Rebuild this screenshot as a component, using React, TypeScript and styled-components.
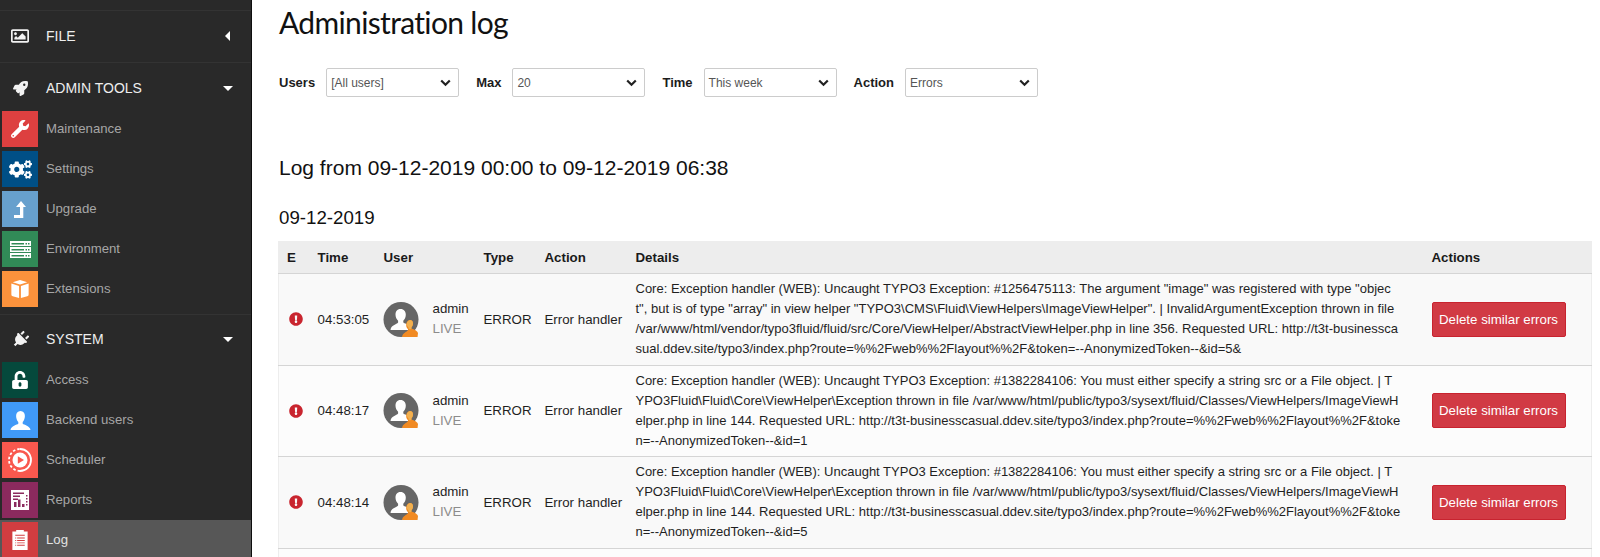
import * as React from "react";
import styled, { createGlobalStyle } from "styled-components";
import {
  FaCogs,
  FaExclamationCircle,
  FaPlug,
  FaRegImage,
  FaRocket,
  FaUnlockAlt,
  FaWrench,
} from "react-icons/fa";

const GlobalStyle = createGlobalStyle`
  html, body {
    margin: 0;
    height: 557px;
    overflow: hidden;
    background: #fff;
    font-family: "Liberation Sans", Arial, sans-serif;
    color: #1a1a1a;
  }
`;

const Page = styled.div`
  display: flex;
  width: 1600px;
  height: 557px;
  overflow: hidden;
`;

/* sidebar */
const Sidebar = styled.nav`
  width: 251px;
  height: 557px;
  flex: none;
  overflow: hidden;
  background: #292929;
  border-right: 1px solid #0e0e0e;
  padding-top: 10px;
  box-sizing: content-box;
`;

const Group = styled.div<{ $last?: boolean }>`
  border-top: 1px solid #333;
  padding-bottom: ${(p) => (p.$last ? 0 : 5)}px;
  &:first-child {
    padding-bottom: 0;
  }
`;

const GroupHead = styled.div<{ $h: number; $pad: string }>`
  display: flex;
  align-items: center;
  box-sizing: border-box;
  height: ${(p) => p.$h}px;
  padding: ${(p) => p.$pad};
  color: #eee;
  font-size: 14px;
  text-transform: uppercase;
`;

const GroupHeadIcon = styled.span<{ $size: number }>`
  display: flex;
  align-items: center;
  justify-content: center;
  width: 40px;
  color: #f2f2f2;
  font-size: ${(p) => p.$size}px;
`;

const GroupTitle = styled.span`
  flex: 1;
  margin-left: 6px;
`;

const Caret = styled.span<{ $open?: boolean }>`
  width: 0;
  height: 0;
  margin-right: 18px;
  border-style: solid;
  ${(p) =>
    p.$open
      ? "border-width: 5px 5px 0 5px; border-color: #fff transparent transparent transparent;"
      : "border-width: 5px 5px 5px 0; border-color: transparent #fff transparent transparent; margin-right: 21px;"}
`;

const ItemList = styled.div`
  display: flex;
  flex-direction: column;
`;

const Item = styled.div<{ $active?: boolean }>`
  display: flex;
  align-items: center;
  height: 40px;
  padding-left: 2px;
  color: ${(p) => (p.$active ? "#e2e2e2" : "#a6a6a6")};
  background: ${(p) => (p.$active ? "#575757" : "transparent")};
  font-size: 13.2px;
`;

const ItemIcon = styled.span<{ $bg: string; $size?: number }>`
  display: flex;
  align-items: center;
  justify-content: center;
  width: 36px;
  height: 36px;
  background: ${(p) => p.$bg};
  color: #fff;
  font-size: ${(p) => p.$size ?? 18}px;
`;

const ItemLabel = styled.span`
  margin: 0 0 2px 8px;
`;

/* main column */
const Main = styled.main`
  flex: 1;
  min-width: 0;
  padding: 0 9px 0 27px;
`;

const Title = styled.h1`
  margin: 3px 0 0;
  font-family: Lato, "Open Sans", sans-serif;
  font-size: 30px;
  font-weight: 400;
  letter-spacing: -0.65px;
  line-height: 38px;
  color: #111;
`;

const Filters = styled.form`
  display: flex;
  align-items: center;
  margin-top: 27px;
  height: 29px;
`;

const FilterLabel = styled.label`
  font-size: 13px;
  font-weight: 700;
  color: #1c1c1c;
  margin-right: 11px;
`;

const FilterSelect = styled.div`
  display: flex;
  align-items: center;
  justify-content: space-between;
  width: 133px;
  height: 29px;
  box-sizing: border-box;
  margin-right: 17px;
  padding: 0 7px 0 4px;
  border: 1px solid #ccc;
  border-radius: 2px;
  background: #fff;
  color: #555;
  font-size: 12px;
`;

const LogRange = styled.h2`
  margin: 57px 0 0;
  font-size: 21px;
  font-weight: 400;
  line-height: 27px;
  color: #111;
`;

const DayHeading = styled.h3`
  margin: 24px 0 0;
  font-size: 18.7px;
  font-weight: 400;
  line-height: 25px;
  color: #111;
`;

const LogTable = styled.table`
  margin: 11px 0 0 -1px;
  width: 1313px;
  table-layout: fixed;
  border-collapse: collapse;
  border: 1px solid #ededed;
  font-size: 13.3px;
  color: #1f1f1f;
`;

const HeadRow = styled.tr`
  height: 32px;
  background: #ededed;
`;

const HeadCell = styled.th<{ $w: number }>`
  width: ${(p) => p.$w}px;
  padding: 0 0 0 8px;
  box-sizing: border-box;
  text-align: left;
  font-weight: 700;
  color: #1a1a1a;
  border-bottom: 1px solid #d5d5d5;
`;

const Row = styled.tr`
  height: 91.5px;
  background: #f9f9f9;
  &:nth-child(even) {
    background: #fcfcfc;
  }
`;

const Cell = styled.td`
  padding: 0 0 0 8px;
  border-bottom: 1px solid #d5d5d5;
  vertical-align: middle;
  white-space: nowrap;
`;

const ErrorMark = styled.span`
  display: flex;
  color: #c9252f;
  font-size: 14px;
  margin-left: 2px;
`;

const UserBox = styled.div`
  display: flex;
  align-items: center;
  gap: 14px;
  margin-left: -1px;
`;

const UserName = styled.div`
  line-height: 20px;
`;

const Workspace = styled.div`
  line-height: 20px;
  color: #8c8c8c;
`;

const DetailLine = styled.div`
  font-size: 13px;
  line-height: 20px;
`;

const DangerButton = styled.button`
  display: block;
  width: 134px;
  height: 35px;
  padding: 0;
  border: 1px solid #c8232f;
  border-radius: 2px;
  background: #d13a44;
  color: #fff;
  font-family: inherit;
  font-size: 13.3px;
`;

const Chevron = () => (
  <svg width="11" height="8" viewBox="0 0 11 8">
    <path d="M1.2 1.5 5.5 5.8 9.8 1.5" fill="none" stroke="#222" strokeWidth="2.2" />
  </svg>
);

const UpgradeIcon = () => (
  <svg width="12" height="17" viewBox="0 0 12 17" fill="#fff">
    <path d="M7 0 12 6H9.300V17H0V14H6V6H2Z" />
  </svg>
);

const ServerIcon = () => (
  <svg width="21" height="17" viewBox="0 0 21 17" fill="#fff">
    <path fillRule="evenodd" d="M0 0h21v5H0zM1.500 2v1.500H14V2zM15.500 2v1.500h1.500V2zM18 2v1.500h1.500V2z" />
    <path fillRule="evenodd" d="M0 6h21v5H0zM1.500 8v1.500H14V8zM15.500 8v1.500h1.500V8zM18 8v1.500h1.500V8z" />
    <path fillRule="evenodd" d="M0 12h21v5H0zM1.500 14v1.500H14V14zM15.500 14v1.500h1.500V14zM18 14v1.500h1.500V14z" />
  </svg>
);

const BoxIcon = () => (
  <svg width="20" height="20" viewBox="0 0 22 22" fill="#fff">
    <path d="M3 3.500 11 1l8 2.500L11 6z" />
    <path d="M1.500 5 10 7.800V21L3 19a2 2 0 0 1-1.500-2z" />
    <path d="M20.500 5 12 7.800V21l7-2a2 2 0 0 0 1.500-2z" />
  </svg>
);

const PersonIcon = () => (
  <svg width="21" height="21" viewBox="0 0 22 22" fill="#fff">
    <path d="M11 1c3 0 4.600 2.300 4.600 5.200 0 2.600-1.100 5-2.300 6.300v1.900c1.200 1.100 7.700 2.100 8.200 6.600H.5c.5-4.500 7-5.500 8.200-6.600v-1.900C7.500 11.200 6.400 8.800 6.400 6.200 6.400 3.300 8 1 11 1z" />
  </svg>
);

const SchedulerIcon = () => (
  <svg width="26" height="26" viewBox="0 0 26 26" fill="none">
    <path d="M13 2a11 11 0 0 1 0 22" stroke="#fff" strokeWidth="1.800" />
    <path d="M13 24A11 11 0 0 1 13 2" stroke="#fff" strokeWidth="1.800" strokeDasharray="2.500 2" />
    <circle cx="13" cy="13" r="7.500" fill="#fff" />
    <path d="M10.800 9.200 17 13l-6.200 3.800z" fill="#f9584e" />
  </svg>
);

const ReportIcon = () => (
  <svg width="18" height="20" viewBox="0 0 18 20">
    <path d="M0 0h18v20H0z" fill="#fff" />
    <path d="M2 2.500h11v1.500H2zM2 5.500h7V7H2zM2 8.500h5V10H2z" fill="#8b2a5e" />
    <path d="M3 17v-5h2.500v5zM7 17V9.500h2.500V17zM11 17v-3h2.500v3z" fill="#8b2a5e" />
    <path d="M15 5h1.500v1.500H15zM15 8h1.500v1.500H15zM15 11h1.500v1.500H15zM15 14h1.500v1.500H15z" fill="#8b2a5e" />
  </svg>
);

const ClipboardIcon = () => (
  <svg width="16" height="20" viewBox="0 0 16 21">
    <path d="M0 1.500h4V0h8v1.500h4V21H0z" fill="#fff" />
    <path d="M3 5h10v1H3zM5 8h8v1H5zM5 10.500h8v1H5zM5 13h8v1H5zM5 15.500h8v1H5z" fill="#d13d40" />
    <path d="M3 8h1v1H3zM3 10.500h1v1H3zM3 13h1v1H3zM3 15.500h1v1H3z" fill="#d13d40" />
  </svg>
);

const Avatar = () => (
  <svg width="36" height="35" viewBox="0 0 36 35">
    <circle cx="18" cy="17.500" r="17.500" fill="#666" />
    <path d="M17.500 7c3.500 0 5.300 2.500 5.300 5.700 0 2.400-1.100 4.700-2.500 6v1.700c1.100 1 4.500 1.500 5.700 3.200l-1 4.400H7.500c.2-5 6.300-5.700 7.600-7.600v-1.700c-1.400-1.300-2.600-3.600-2.600-6C12.500 9.500 14 7 17.500 7z" fill="#fff" />
    <path d="M27 18c2 0 3 1.500 3 3.500 0 1.500-.7 3-1.500 3.700v1.300c1 .7 5 1 6.500 4.500l-.5 4.500H19c.4-5 4.700-5.200 6-7.500v-1c-1-.7-1.800-2.200-1.800-3.800C23.200 20.500 25 18 27 18z" fill="#f18a22" />
    <path d="M27 18c2 0 3 1.500 3 3.500 0 1.500-.7 3-1.500 3.700v1.300L27 27.500l-1.500-1.100v-1c-1-.7-1.800-2.200-1.800-3.800 0-1.100 1.300-3.600 3.300-3.600z" fill="#f2b04f" />
  </svg>
);

const adminItems = [
  { label: "Maintenance", bg: "#dd4040", icon: <FaWrench /> },
  { label: "Settings", bg: "#004f86", size: 23, icon: <FaCogs /> },
  { label: "Upgrade", bg: "#67a0cd", icon: <UpgradeIcon /> },
  { label: "Environment", bg: "#318a57", icon: <ServerIcon /> },
  { label: "Extensions", bg: "#fb923c", icon: <BoxIcon /> },
];

const systemItems = [
  { label: "Access", bg: "#05493c", icon: <FaUnlockAlt /> },
  { label: "Backend users", bg: "#4099f8", icon: <PersonIcon /> },
  { label: "Scheduler", bg: "#f9584e", icon: <SchedulerIcon /> },
  { label: "Reports", bg: "#8b2a5e", icon: <ReportIcon /> },
  { label: "Log", bg: "#d13d40", icon: <ClipboardIcon />, active: true },
];

const filters = [
  { label: "Users", value: "[All users]" },
  { label: "Max", value: "20" },
  { label: "Time", value: "This week" },
  { label: "Action", value: "Errors" },
];

const columns = [
  { name: "E", w: 31 },
  { name: "Time", w: 66 },
  { name: "User", w: 100 },
  { name: "Type", w: 61 },
  { name: "Action", w: 91 },
  { name: "Details", w: 796 },
  { name: "Actions", w: 168 },
];

const logRows = [
  {
    time: "04:53:05",
    lines: [
      'Core: Exception handler (WEB): Uncaught TYPO3 Exception: #1256475113: The argument "image" was registered with type "objec',
      't", but is of type "array" in view helper "TYPO3\\CMS\\Fluid\\ViewHelpers\\ImageViewHelper". | InvalidArgumentException thrown in file',
      "/var/www/html/vendor/typo3fluid/fluid/src/Core/ViewHelper/AbstractViewHelper.php in line 356. Requested URL: http://t3t-businessca",
      "sual.ddev.site/typo3/index.php?route=%%2Fweb%%2Flayout%%2F&token=--AnonymizedToken--&id=5&",
    ],
  },
  {
    time: "04:48:17",
    lines: [
      "Core: Exception handler (WEB): Uncaught TYPO3 Exception: #1382284106: You must either specify a string src or a File object. | T",
      "YPO3Fluid\\Fluid\\Core\\ViewHelper\\Exception thrown in file /var/www/html/public/typo3/sysext/fluid/Classes/ViewHelpers/ImageViewH",
      "elper.php in line 144. Requested URL: http://t3t-businesscasual.ddev.site/typo3/index.php?route=%%2Fweb%%2Flayout%%2F&toke",
      "n=--AnonymizedToken--&id=1",
    ],
  },
  {
    time: "04:48:14",
    lines: [
      "Core: Exception handler (WEB): Uncaught TYPO3 Exception: #1382284106: You must either specify a string src or a File object. | T",
      "YPO3Fluid\\Fluid\\Core\\ViewHelper\\Exception thrown in file /var/www/html/public/typo3/sysext/fluid/Classes/ViewHelpers/ImageViewH",
      "elper.php in line 144. Requested URL: http://t3t-businesscasual.ddev.site/typo3/index.php?route=%%2Fweb%%2Flayout%%2F&toke",
      "n=--AnonymizedToken--&id=5",
    ],
  },
];

export default function App() {
  return (
    <Page>
      <GlobalStyle />
      <Sidebar>
        <Group>
          <GroupHead $h={51} $pad="0 0 2px">
            <GroupHeadIcon $size={18}><FaRegImage /></GroupHeadIcon>
            <GroupTitle>File</GroupTitle>
            <Caret />
          </GroupHead>
        </Group>
        <Group>
          <GroupHead $h={46} $pad="4px 0 0">
            <GroupHeadIcon $size={15}><FaRocket /></GroupHeadIcon>
            <GroupTitle>Admin tools</GroupTitle>
            <Caret $open />
          </GroupHead>
          <ItemList>
            {adminItems.map((it) => (
              <Item key={it.label}>
                <ItemIcon $bg={it.bg} $size={it.size}>{it.icon}</ItemIcon>
                <ItemLabel>{it.label}</ItemLabel>
              </Item>
            ))}
          </ItemList>
        </Group>
        <Group $last>
          <GroupHead $h={45} $pad="3px 0 0">
            <GroupHeadIcon $size={17}><FaPlug style={{ transform: "rotate(45deg)" }} /></GroupHeadIcon>
            <GroupTitle>System</GroupTitle>
            <Caret $open />
          </GroupHead>
          <ItemList>
            {systemItems.map((it) => (
              <Item key={it.label} $active={it.active}>
                <ItemIcon $bg={it.bg}>{it.icon}</ItemIcon>
                <ItemLabel>{it.label}</ItemLabel>
              </Item>
            ))}
          </ItemList>
        </Group>
      </Sidebar>
      <Main>
        <Title>Administration log</Title>
        <Filters>
          {filters.map((f) => (
            <React.Fragment key={f.label}>
              <FilterLabel>{f.label}</FilterLabel>
              <FilterSelect>
                {f.value}
                <Chevron />
              </FilterSelect>
            </React.Fragment>
          ))}
        </Filters>
        <LogRange>Log from 09-12-2019 00:00 to 09-12-2019 06:38</LogRange>
        <DayHeading>09-12-2019</DayHeading>
        <LogTable>
          <thead>
            <HeadRow>
              {columns.map((c) => (
                <HeadCell key={c.name} $w={c.w}>{c.name}</HeadCell>
              ))}
            </HeadRow>
          </thead>
          <tbody>
            {logRows.map((r) => (
              <Row key={r.time}>
                <Cell><ErrorMark><FaExclamationCircle /></ErrorMark></Cell>
                <Cell>{r.time}</Cell>
                <Cell>
                  <UserBox>
                    <Avatar />
                    <div>
                      <UserName>admin</UserName>
                      <Workspace>LIVE</Workspace>
                    </div>
                  </UserBox>
                </Cell>
                <Cell>ERROR</Cell>
                <Cell>Error handler</Cell>
                <Cell>
                  {r.lines.map((l) => (
                    <DetailLine key={l}>{l}</DetailLine>
                  ))}
                </Cell>
                <Cell><DangerButton>Delete similar errors</DangerButton></Cell>
              </Row>
            ))}
            <Row>
              <Cell colSpan={7} />
            </Row>
          </tbody>
        </LogTable>
      </Main>
    </Page>
  );
}
